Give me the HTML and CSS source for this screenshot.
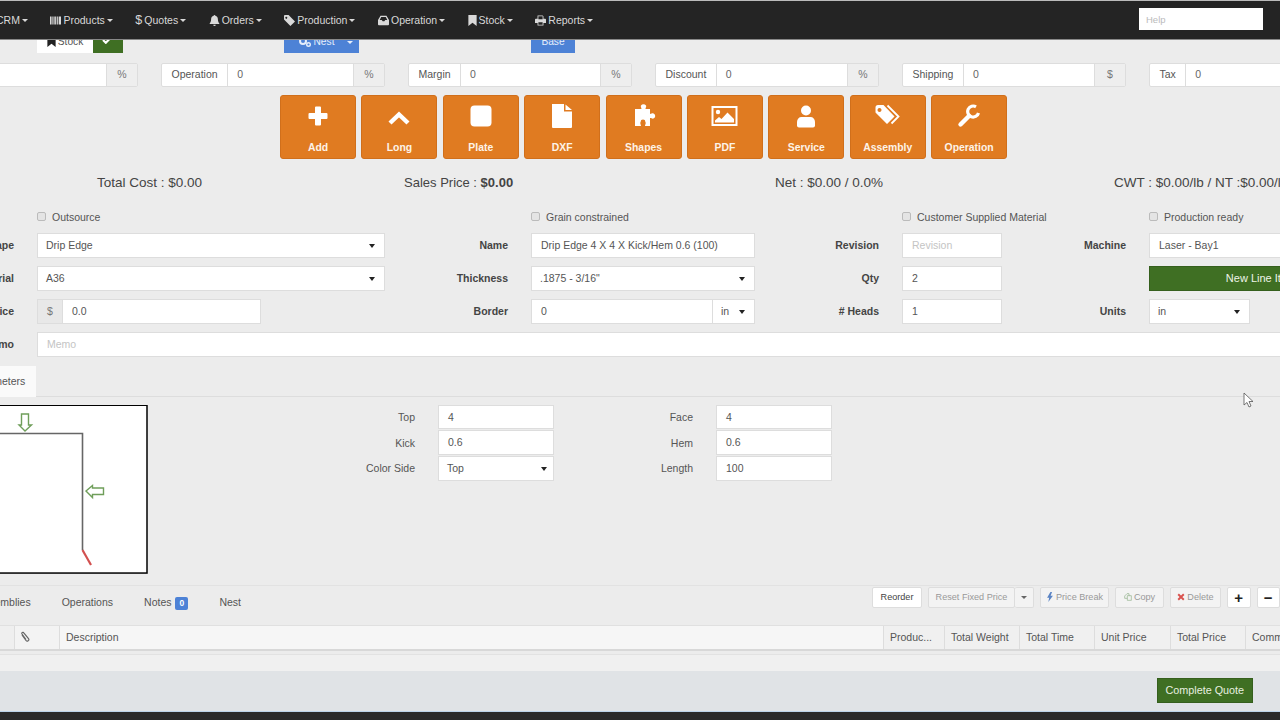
FILE: index.html
```html
<!DOCTYPE html>
<html lang="en">
<head>
<meta charset="utf-8">
<title>Quote</title>
<link rel="stylesheet" href="styles.css">
</head>
<body>
<nav class="navbar">
  <a class="nav-item">CRM<i class="caret"></i></a>
  <a class="nav-item"><svg class="ni" viewBox="0 0 14 12"><path d="M0 1h2v10H0zM3 1h1.500v10H3zM5.500 1h2v10h-2zM8.500 1H10v10H8.500zM11 1h3v10h-3z"/></svg>Products<i class="caret"></i></a>
  <a class="nav-item"><span class="dollar">$</span>Quotes<i class="caret"></i></a>
  <a class="nav-item"><svg class="ni" viewBox="0 0 12 13"><path d="M6 0a1 1 0 0 1 1 1c2 .5 3 2 3 4 0 3 1 4 2 5.500H0C1 9 2 8 2 5c0-2 1-3.500 3-4a1 1 0 0 1 1-1zM4.500 11.500h3a1.500 1.500 0 0 1-3 0z"/></svg>Orders<i class="caret"></i></a>
  <a class="nav-item"><svg class="ni" viewBox="0 0 12 12"><path d="M0 1a1 1 0 0 1 1-1h4l7 7-5 5-7-7zM2.500 2a1 1 0 1 0 .01 0z" fill-rule="evenodd"/></svg>Production<i class="caret"></i></a>
  <a class="nav-item"><svg class="ni" viewBox="0 0 13 11"><path d="M3 0h7l3 5v5a1 1 0 0 1-1 1H1a1 1 0 0 1-1-1V5zM3.800 1.500 2 5h2.500l1 1.500h2l1-1.500H11L9.200 1.500z" fill-rule="evenodd"/></svg>Operation<i class="caret"></i></a>
  <a class="nav-item"><svg class="ni ni-narrow" viewBox="0 0 9 12"><path d="M0 0h9v12L4.500 8.500 0 12z"/></svg>Stock<i class="caret"></i></a>
  <a class="nav-item"><svg class="ni" viewBox="0 0 13 12"><path d="M3 0h6l1 1v3h2a1 1 0 0 1 1 1v4h-3v3H3V9H0V5a1 1 0 0 1 1-1h2zM4 1v3.500h5V1zM4 8v3h5V8z" fill-rule="evenodd"/></svg>Reports<i class="caret"></i></a>
  <input class="help" placeholder="Help">
</nav>

<div class="subbar">
  <div class="btn-pair stock">
    <span class="sb sb-white"><svg class="sb-ico" viewBox="0 0 9 12"><path d="M0 0h9v12L4.500 8.500 0 12z"/></svg>Stock</span>
    <span class="sb sb-green"><svg class="sb-ico" viewBox="0 0 12 10"><path d="M1 5l3.500 3.500L11 2" fill="none" stroke="#fff" stroke-width="2.600"/></svg></span>
  </div>
  <div class="btn-pair nest">
    <span class="sb sb-blue sb-nest"><svg class="sb-gear" viewBox="0 0 12 10"><circle cx="4" cy="4" r="3" fill="none" stroke="#e5eefb" stroke-width="2"/><circle cx="9.500" cy="7.500" r="1.800" fill="none" stroke="#e5eefb" stroke-width="1.400"/></svg>Nest</span>
    <span class="sb sb-blue sb-split"><i class="caret"></i></span>
  </div>
  <span class="sb sb-blue base">Base</span>
</div>

<div class="rates">
  <div class="ig"><span class="ig-in"></span><span class="ig-add">%</span></div>
  <div class="ig"><span class="ig-label">Operation</span><span class="ig-in">0</span><span class="ig-add">%</span></div>
  <div class="ig"><span class="ig-label">Margin</span><span class="ig-in">0</span><span class="ig-add">%</span></div>
  <div class="ig"><span class="ig-label">Discount</span><span class="ig-in">0</span><span class="ig-add">%</span></div>
  <div class="ig"><span class="ig-label">Shipping</span><span class="ig-in">0</span><span class="ig-add">$</span></div>
  <div class="ig"><span class="ig-label">Tax</span><span class="ig-in">0</span></div>
</div>

<div class="actions">
  <button class="act"><svg viewBox="0 0 24 24"><path d="M9 3.500a1 1 0 0 1 1-1h4a1 1 0 0 1 1 1V9h5.500a1 1 0 0 1 1 1v4a1 1 0 0 1-1 1H15v5.500a1 1 0 0 1-1 1h-4a1 1 0 0 1-1-1V15H3.500a1 1 0 0 1-1-1v-4a1 1 0 0 1 1-1H9z"/></svg>Add</button>
  <button class="act"><svg viewBox="0 0 24 24"><path d="M3 19 12 10.500 21 19" fill="none" stroke="#fff" stroke-width="4.400" stroke-linejoin="miter"/></svg>Long</button>
  <button class="act"><svg viewBox="0 0 24 24"><rect x="1.500" y="1.500" width="21" height="21" rx="4"/></svg>Plate</button>
  <button class="act"><svg viewBox="0 0 24 24"><path d="M2 0h12v7.500h8V23a1 1 0 0 1-1 1H3a1 1 0 0 1-1-1zM15.500 0.500 22 6h-6.500z"/></svg>DXF</button>
  <button class="act"><svg viewBox="0 0 24 24"><path d="M9 1.500a3 3 0 0 1 5 0c.6 1.200-.5 2-.5 3.500H18v5c1.500 0 2.300-1 3.500-.6a2.800 2.800 0 0 1 0 5.200c-1.200.4-2-.6-3.500-.6v8h-5c0-1.500 1.300-2.500.4-4a2.400 2.400 0 0 0-4.800 0c-.9 1.500.4 2.500.4 4H3V5h6.500C9.500 3.500 8.400 2.700 9 1.500z"/></svg>Shapes</button>
  <button class="act"><svg class="wide" viewBox="0 0 26 24"><path d="M1 3h24v18H1z" fill="none" stroke="#fff" stroke-width="2"/><circle cx="6.500" cy="8" r="2.200"/><path d="M3.500 18.500v-2l4-3.500 2.500 2 6-6.500 6.500 6.500v3.500z"/></svg>PDF</button>
  <button class="act"><svg viewBox="0 0 24 24"><circle cx="12" cy="6.500" r="5"/><path d="M5 23.500a2 2 0 0 1-2-2v-3.500c0-3 2-5 4.500-5h9c2.500 0 4.500 2 4.500 5v3.500a2 2 0 0 1-2 2z"/></svg>Service</button>
  <button class="act"><svg class="wide" viewBox="0 0 26 24"><path d="M1 3.500A2.500 2.500 0 0 1 3.500 1H9l11 11.500-7.500 7.500L1 8.500zM5 4a2 2 0 1 0 .01 0z" fill-rule="evenodd"/><path d="M13 1.500l11 11-7 7" fill="none" stroke="#fff" stroke-width="1.800"/></svg>Assembly</button>
  <button class="act"><svg viewBox="0 0 24 24"><path d="M3.500 20.500 12 12" fill="none" stroke="#fff" stroke-width="4.400" stroke-linecap="round"/><path d="M19 2.800A5.500 5.500 0 1 0 21.500 9" fill="none" stroke="#fff" stroke-width="3.200"/></svg>Operation</button>
</div>

<div class="totals">
  <span>Total Cost : $0.00</span>
  <span class="sales">Sales Price : <b>$0.00</b></span>
  <span>Net : $0.00 / 0.0%</span>
  <span>CWT : $0.00/lb / NT :$0.00/lb</span>
</div>

<div class="form">
  <span></span>
  <label class="chk"><i class="box"></i>Outsource</label>
  <span></span>
  <label class="chk"><i class="box"></i>Grain constrained</label>
  <span></span>
  <label class="chk"><i class="box"></i>Customer Supplied Material</label>
  <span></span>
  <label class="chk"><i class="box"></i>Production ready</label>

  <span class="lb">Shape</span>
  <div class="ctl sel">Drip Edge<i class="arrow"></i></div>
  <span class="lb">Name</span>
  <div class="ctl">Drip Edge 4 X 4 X Kick/Hem 0.6 (100)</div>
  <span class="lb">Revision</span>
  <div class="ctl ph">Revision</div>
  <span class="lb">Machine</span>
  <div class="ctl">Laser - Bay1</div>

  <span class="lb">Material</span>
  <div class="ctl sel">A36<i class="arrow"></i></div>
  <span class="lb">Thickness</span>
  <div class="ctl sel">.1875 - 3/16"<i class="arrow"></i></div>
  <span class="lb">Qty</span>
  <div class="ctl">2</div>
  <span></span>
  <button class="newline">New Line Item</button>

  <span class="lb">Price</span>
  <div class="pricegrp"><span class="pre">$</span><div class="ctl ctl-flat">0.0</div></div>
  <span class="lb">Border</span>
  <div class="bordergrp"><div class="ctl ctl-flat">0</div><div class="ctl sel unit">in<i class="arrow"></i></div></div>
  <span class="lb"># Heads</span>
  <div class="ctl">1</div>
  <span class="lb">Units</span>
  <div class="ctl sel units">in<i class="arrow"></i></div>

  <span class="lb">Memo</span>
  <div class="ctl ph memo">Memo</div>
</div>

<div class="tabstrip"><span class="tab">Parameters</span></div>

<div class="panel">
  <svg class="drawing" viewBox="-2 405 150 169">
    <rect x="-12" y="405.250" width="159" height="167.800" fill="#fff" stroke="#000" stroke-width="1.500"/>
    <path d="M-2 433.500H82.500V550" fill="none" stroke="#666" stroke-width="1.600"/>
    <path d="M82.500 550 91 565" fill="none" stroke="#d2504f" stroke-width="2.200"/>
    <path d="M21.500 414H28.500V425H31.500L25 431 19 425H21.500Z" fill="none" stroke="#6f9e5a" stroke-width="1.400"/>
    <path d="M103.500 488V494.500H92.500V497.500L86 491 92.500 485.500V488Z" fill="none" stroke="#6f9e5a" stroke-width="1.400"/>
  </svg>
  <div class="params">
    <span class="plb">Top</span><div class="ctl">4</div>
    <span class="plb">Face</span><div class="ctl">4</div>
    <span class="plb">Kick</span><div class="ctl">0.6</div>
    <span class="plb">Hem</span><div class="ctl">0.6</div>
    <span class="plb">Color Side</span><div class="ctl sel tight">Top<i class="arrow"></i></div>
    <span class="plb">Length</span><div class="ctl">100</div>
  </div>
</div>

<div class="lower">
  <div class="lower-tabs">
    <span class="lt">Assemblies</span>
    <span class="lt">Operations</span>
    <span class="lt">Notes <b class="badge">0</b></span>
    <span class="lt">Nest</span>
  </div>
  <div class="toolbar">
    <button class="tb t-reorder">Reorder</button>
    <div class="tb-pair">
      <button class="tb off reset">Reset Fixed Price</button>
      <button class="tb off split"><i class="caret dark"></i></button>
    </div>
    <button class="tb off t-price"><svg class="tic" viewBox="0 0 7 12"><path d="M4 0 0 7h2.500L1.500 12 7 4.500H4.200L6 0z" fill="#5b84c4"/></svg>Price Break</button>
    <button class="tb off t-copy"><svg class="tic" viewBox="0 0 12 12"><path d="M4.500 1h3v3H11v7H5V8H1V4.500zM5 8V4h3" fill="none" stroke="#8fb08a"/></svg>Copy</button>
    <button class="tb off t-delete"><svg class="tic" viewBox="0 0 10 10"><path d="M1.500 1.500l7 7M8.500 1.500l-7 7" stroke="#d9534f" stroke-width="2.400"/></svg>Delete</button>
    <button class="tb sq">+</button>
    <button class="tb sq">−</button>
  </div>
</div>

<div class="thead">
  <span class="th w0"></span>
  <span class="th w1"><svg class="clip" viewBox="0 0 10 12"><path d="M2 4 6 9.500a1.500 1.500 0 0 0 2.500-1.800L3.800 1.800a1 1 0 0 0-1.800 1.200l4 5.500" fill="none" stroke="#666" stroke-width="1.200"/></svg></span>
  <span class="th w2">Description</span>
  <span class="th w3">Produc...</span>
  <span class="th w4">Total Weight</span>
  <span class="th w5">Total Time</span>
  <span class="th w6">Unit Price</span>
  <span class="th w7">Total Price</span>
  <span class="th w8">Comments</span>
</div>
<div class="tbody"></div>

<footer class="foot"><button class="complete">Complete Quote</button></footer>
<div class="bottombar"></div>

<svg class="cursor" viewBox="0 0 10 17"><path d="M1 1v12l3-2.500 2 4.500 2-1-2-4.500h4z" fill="#fff" stroke="#555" stroke-width=".8"/></svg>
</body>
</html>
```
FILE: styles.css
```css
* { box-sizing: border-box; }
html, body { margin: 0; height: 720px; overflow: hidden; }
body {
  background: #ececec;
  font-family: "Liberation Sans", Arial, sans-serif;
  font-size: 10.5px;
  color: #555;
  display: flex;
  flex-direction: column;
  width: 1280px;
  position: relative;
}
button { font-family: inherit; cursor: default; }

/* navbar */
.navbar {
  position: relative;
  z-index: 2;
  flex: none;
  height: 40px;
  background: #242424;
  border-top: 1px solid #bbb;
  border-bottom: 1px solid #888;
  display: flex;
  align-items: center;
  gap: 22.500px;
  margin-left: -4px;
  color: #d9d9d9;
  font-size: 10.500px;
}
.nav-item { display: flex; align-items: center; white-space: nowrap; }
.ni { width: 11px; height: 11px; fill: #d9d9d9; margin-right: 2px; }
.ni-narrow { width: 9px; }
.dollar { font-size: 12.500px; margin-right: 2px; }
.caret {
  display: inline-block;
  width: 0; height: 0;
  margin-left: 2px;
  border-left: 3px solid transparent;
  border-right: 3px solid transparent;
  border-top: 3px solid currentColor;
}
.caret.dark { color: #666; margin: 0; }
.help {
  position: absolute;
  left: 1143px;
  top: 7px;
  width: 124px;
  height: 22px;
  border: 0;
  background: #fff;
  padding: 0 7px;
  font: 9.500px "Liberation Sans", Arial, sans-serif;
}
.help::placeholder { color: #bbb; }

/* clipped buttons under the navbar */
.subbar {
  flex: none;
  height: 23px;
  margin-top: -10px;
  display: flex;
  color: #fff;
}
.btn-pair { display: flex; }
.stock { margin-left: 37px; }
.nest { margin-left: 161px; }
.base { margin-left: 172px; width: 44px; }
.sb {
  height: 23px;
  display: flex;
  align-items: flex-end;
  justify-content: center;
  padding-bottom: 6px;
  font-size: 10.200px;
}
.sb-white { width: 56px; background: #fff; color: #555; }
.sb-green { width: 30px; background: #3f6f23; padding-bottom: 9px; }
.sb-blue { background: #4d82d6; color: #e5eefb; }
.sb-nest { width: 55px; padding-left: 10px; }
.sb-split { width: 20px; padding-bottom: 9px; }
.sb-ico { width: 9px; height: 11px; margin-right: 2px; fill: #222; }
.sb-gear { width: 12px; height: 10px; margin-right: 3px; }
.sb-green .sb-ico { width: 10px; height: 8px; }

/* rates row */
.rates {
  flex: none;
  margin-top: 10px;
  margin-left: -86px;
  height: 23.500px;
  display: flex;
  gap: 23px;
}
.ig {
  flex: none;
  width: 224px;
  display: flex;
  border: 1px solid #ddd;
  border-radius: 2px;
  background: #fff;
  line-height: 21.500px;
}
.ig-label { flex: none; padding: 0 9.500px; border-right: 1px solid #ddd; }
.ig-in { flex: 1; padding: 0 9px; color: #666; }
.ig-add { flex: none; width: 31px; text-align: center; background: #eee; border-left: 1px solid #ddd; color: #777; }

/* big action buttons */
.actions {
  flex: none;
  margin-top: 8px;
  margin-left: 280px;
  display: flex;
  gap: 5.400px;
}
.act {
  flex: none;
  width: 76px;
  height: 64px;
  padding: 8px 0 0;
  border: 1px solid #d06f1b;
  border-radius: 3px;
  background: #e07b21;
  color: #fdf3e8;
  font-size: 10.400px;
  font-weight: bold;
  display: flex;
  flex-direction: column;
  align-items: center;
  gap: 14px;
}
.act svg { width: 24px; height: 24px; fill: #fff; flex: none; }
.act svg.wide { width: 27px; }

/* totals */
.totals {
  flex: none;
  margin-top: 14px;
  height: 20px;
  padding-left: 97px;
  display: grid;
  grid-template-columns: 307px 371px 339px 300px;
  align-items: center;
  font-size: 13.500px;
  color: #444;
  white-space: nowrap;
}
.sales { font-size: 13px; }

/* main form */
.form {
  flex: none;
  margin-top: 16px;
  margin-left: -100px;
  display: grid;
  grid-template-columns: 137px 348px 146px 224px 147px 100px 147px 224px;
  grid-template-rows: 16px repeat(4, 25px);
  row-gap: 8px;
  align-items: center;
}
.lb {
  text-align: right;
  padding-right: 23px;
  font-weight: bold;
  color: #444;
  white-space: nowrap;
}
.chk { display: flex; align-items: center; white-space: nowrap; }
.box {
  flex: none;
  width: 9px; height: 9px;
  margin-right: 6px;
  margin-left: 0;
  border: 1px solid #bbb;
  border-radius: 2px;
  background: #e4e4e4;
}
.ctl {
  height: 25px;
  line-height: 23px;
  background: #fff;
  border: 1px solid #ddd;
  padding: 0 9px;
  color: #555;
  position: relative;
  white-space: nowrap;
}
.ph { color: #c4c4c4; }
.sel { padding-left: 8px; }
.sel .arrow {
  position: absolute;
  right: 9px;
  top: 10px;
  width: 0; height: 0;
  border-left: 3px solid transparent;
  border-right: 3px solid transparent;
  border-top: 4px solid #222;
}
.tight .arrow { right: 6px; }
.newline {
  width: 224px;
  height: 25px;
  border: 1px solid #355f1d;
  background: #3f6f23;
  color: #eef4e8;
  font-size: 11px;
}
.pricegrp { display: flex; width: 224px; }
.pre {
  flex: none;
  width: 25px;
  height: 25px;
  line-height: 23px;
  text-align: center;
  background: #e8e8e8;
  border: 1px solid #ddd;
  border-right: 0;
  color: #777;
}
.ctl-flat { flex: 1; }
.bordergrp { display: flex; }
.bordergrp .unit { flex: none; width: 42px; border-left: 0; }
.units { width: 101px; }
.memo { grid-column: 2 / 9; }

/* parameter tab */
.tabstrip {
  flex: none;
  margin-top: 9px;
  height: 31px;
  border-bottom: 1px solid #ddd;
}
.tab {
  display: block;
  width: 76px;
  height: 31px;
  margin-left: -40px;
  padding-left: 11px;
  line-height: 30px;
  background: #fafafa;
  white-space: nowrap;
}

.panel {
  flex: none;
  margin-top: 8px;
  height: 169px;
  display: flex;
}
.drawing { flex: none; width: 150px; height: 169px; margin-left: -2px; }
.params {
  display: grid;
  grid-template-columns: 290px 116px 162px 116px;
  grid-auto-rows: 24.700px;
  row-gap: 1px;
  align-items: center;
  align-self: flex-start;
}
.plb { text-align: right; padding-right: 23px; }
.params .ctl { height: 24.700px; }

/* lower toolbar and tabs */
.lower {
  flex: none;
  margin-top: 11px;
  height: 40px;
  border-top: 1px solid #e2e2e2;
  display: flex;
  justify-content: space-between;
}
.lower-tabs { display: flex; gap: 31px; padding-top: 10px; line-height: 12px; margin-left: -23px; }
.lt { white-space: nowrap; }
.badge {
  display: inline-block;
  width: 13px;
  height: 13px;
  line-height: 13px;
  text-align: center;
  border-radius: 2px;
  background: #4d82d6;
  color: #fff;
  font-size: 8.500px;
  margin-left: 1px;
}
.toolbar {
  display: flex;
  gap: 6px;
  height: 21.500px;
  margin-top: 1px;
}
.tb {
  height: 21.500px;
  padding: 0;
  border: 1px solid #ddd;
  border-radius: 2px;
  background: #fff;
  color: #444;
  font-size: 9.100px;
  display: flex;
  align-items: center;
  justify-content: center;
  white-space: nowrap;
}
.tb.off { background: #f3f3f3; color: #999; }
.tb-pair { display: flex; }
.t-reorder { width: 50px; }
.t-price { width: 69px; }
.t-copy { width: 49px; }
.t-delete { width: 51px; }
.tb.reset { width: 87px; }
.tb.split { width: 19px; border-left: 0; }
.tb.sq { width: 23.500px; font-size: 15px; font-weight: bold; color: #222; }
.tic { width: 8px; height: 10px; margin-right: 2px; }

/* table */
.thead {
  flex: none;
  height: 26px;
  display: flex;
  background: #f6f6f6;
  border-top: 1px solid #e0e0e0;
  border-bottom: 2px solid #d8d8d8;
  line-height: 23px;
  white-space: nowrap;
}
.th { flex: none; padding-left: 6px; border-right: 1px solid #ddd; overflow: hidden; }
.w0 { width: 15px; background: #efefef; padding: 0; }
.w1 { width: 45px; background: #f3f3f3; padding-left: 5px; }
.w2 { width: 824px; }
.w3 { width: 61px; background: #f0f0f0; }
.w4 { width: 75px; background: #f0f0f0; }
.w5 { width: 75px; background: #f0f0f0; }
.w6 { width: 76px; background: #f0f0f0; }
.w7 { width: 75px; background: #f0f0f0; }
.w8 { width: 60px; border-right: 0; background: #f0f0f0; }
.clip { width: 10px; height: 12px; margin-top: 5px; }
.tbody {
  flex: none;
  height: 17px;
  margin-top: 3px;
  border-top: 1px solid #e2e2e2;
  background: #f0f0f0;
}

/* footer */
.foot {
  flex: none;
  height: 40px;
  background: #e0e3e6;
  padding: 7px 27px 0 0;
  display: flex;
  justify-content: flex-end;
  align-items: flex-start;
}
.complete {
  width: 96.500px;
  height: 25.500px;
  border: 1px solid #355f1d;
  background: #3f6f23;
  color: #e8f0e0;
  font-size: 10.800px;
}
.bottombar {
  flex: none;
  height: 9px;
  background: #2a2a2a;
  border-top: 1px solid #bcd4ea;
}
.cursor {
  position: absolute;
  left: 1243px;
  top: 392px;
  width: 10px;
  height: 17px;
}
```
